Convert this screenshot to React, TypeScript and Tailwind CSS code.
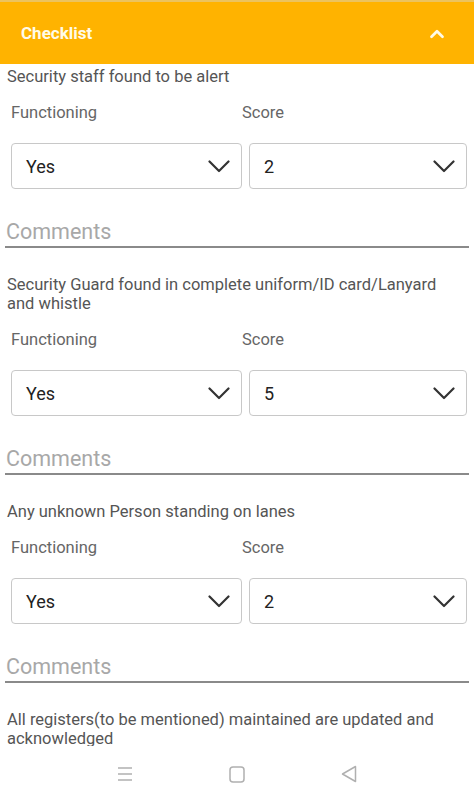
import { ChevronUp } from 'lucide-react';

const items = [
  { title: 'Security staff found to be alert', functioning: 'Yes', score: '2' },
  {
    title: 'Security Guard found in complete uniform/ID card/Lanyard and whistle',
    functioning: 'Yes',
    score: '5',
  },
  { title: 'Any unknown Person standing on lanes', functioning: 'Yes', score: '2' },
  {
    title: 'All registers(to be mentioned) maintained are updated and acknowledged',
    functioning: 'Yes',
    score: '2',
  },
];

function Select({ value }: { value: string }) {
  return (
    <div className="h-[46px] flex items-center justify-between pl-[14px] pr-[11px] border border-[#c8c8c8] rounded-[4px] bg-white">
      <span className="text-[18px] text-[#222]">{value}</span>
      <svg width="22" height="13" viewBox="0 0 22 13" fill="none" stroke="#333" strokeWidth="2.2" strokeLinecap="round" strokeLinejoin="round">
        <path d="M1.5 1.5 11 11l9.5-9.5" />
      </svg>
    </div>
  );
}

function Item({ title, functioning, score, first }: { title: string; functioning: string; score: string; first?: boolean }) {
  return (
    <div className={first ? 'pt-[3px]' : 'pt-[27px]'}>
      <p className="px-[7px] pr-[20px] text-[16.5px] leading-[19px] text-[#555]">{title}</p>
      <div className="grid grid-cols-[231px_1fr] pl-[11px] mt-[17px] text-[16.5px] leading-[20px] text-[#666]">
        <span>Functioning</span>
        <span>Score</span>
      </div>
      <div className="grid grid-cols-[231px_218px] gap-[7px] pl-[11px] mt-[20px]">
        <Select value={functioning} />
        <Select value={score} />
      </div>
      <div className="mx-[5px] mt-[28px] border-b-2 border-[#8a8a8a]">
        <div className="pl-[1px] h-[29px] leading-[29px] text-[21.5px] text-[#a8a8a8]">Comments</div>
      </div>
    </div>
  );
}

export default function App() {
  return (
    <div className="w-[474px] h-[802px] flex flex-col bg-white overflow-hidden" style={{ fontFamily: 'Roboto, "Noto Sans", sans-serif' }}>
      <div className="h-[2px] bg-[#ecc35e]" />
      <div className="h-[62px] bg-[#ffb300] flex items-center justify-between pl-[21px] pr-[26px] pt-[2px] shrink-0">
        <span className="text-[17px] font-bold text-[#fffbe8]">Checklist</span>
        <ChevronUp className="w-[22px] h-[22px] text-[#fffbe8]" strokeWidth={3} />
      </div>
      <div className="flex-1 overflow-hidden">
        {items.map((it, i) => (
          <Item key={i} {...it} first={i === 0} />
        ))}
      </div>
      <div className="h-[56px] shrink-0 bg-white flex items-center justify-center gap-[96px]">
        <svg width="16" height="16" viewBox="0 0 16 16" fill="none" stroke="#b0b0b0" strokeWidth="1.5">
          <path d="M1 2h14M1 8h14M1 14h14" />
        </svg>
        <svg width="16" height="17" viewBox="0 0 16 17" fill="none" stroke="#b0b0b0" strokeWidth="1.5">
          <rect x="1" y="1" width="14" height="15" rx="3" />
        </svg>
        <svg width="16" height="18" viewBox="0 0 16 18" fill="none" stroke="#b0b0b0" strokeWidth="1.5" strokeLinejoin="round">
          <path d="M14.5 1.5v15L1.5 9z" />
        </svg>
      </div>
    </div>
  );
}
